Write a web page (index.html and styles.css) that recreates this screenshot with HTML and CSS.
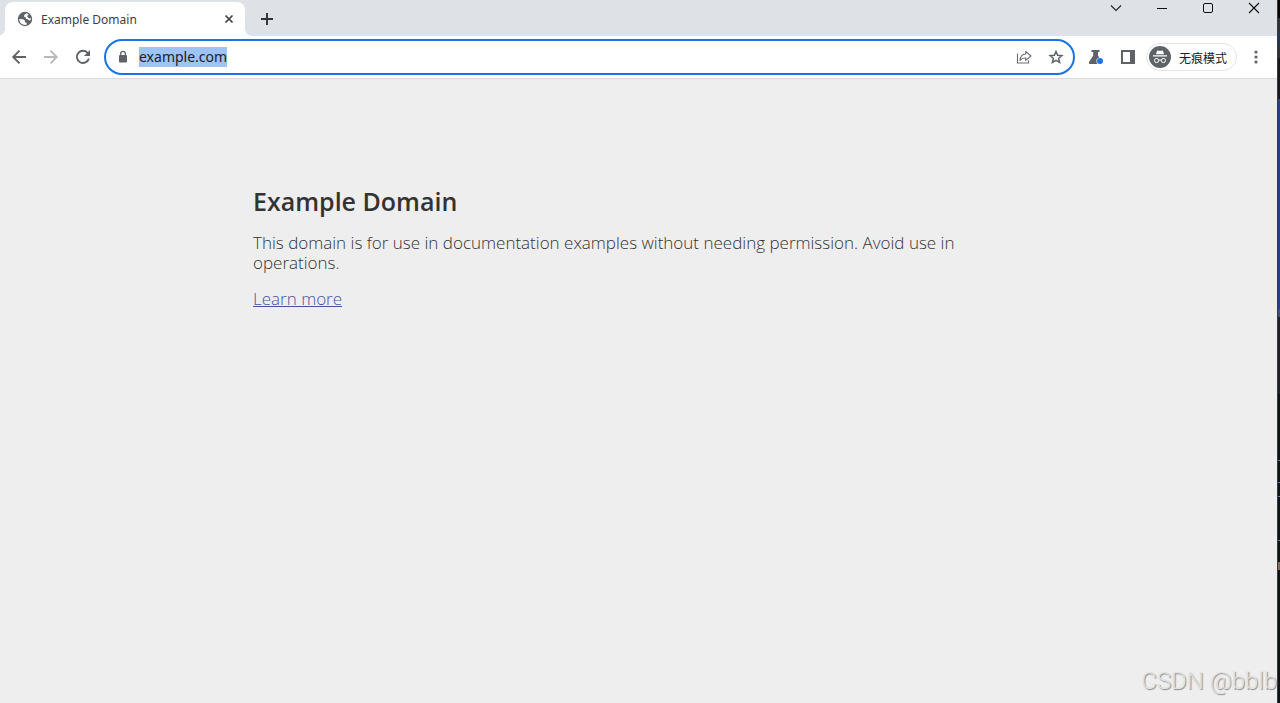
FILE: index.html
```html
<!DOCTYPE html>
<html lang="en">
<head>
<meta charset="utf-8">
<title>Example Domain</title>
<link rel="stylesheet" href="styles.css">
</head>
<body>
<div class="desktop">
  <div class="browser">
    <header class="tabstrip">
      <div class="tab">
        <svg class="favicon" viewBox="0 0 16 16" width="16" height="16"><circle cx="8" cy="8" r="7.2" fill="#5f6368"/><path d="M9.800 2.200 7.500 3.500 7 5.500 8.800 6.500 9 8l2 .2 1 1.300 1.800-.4V7.500L11.500 7 10 5l1.800-1.200zM2.100 8l3.900.2 2 1.600v1.400L9.800 12 9.300 13.900Q2.700 14.300 2.100 8z" fill="#fff"/></svg>
        <span class="tab-title">Example Domain</span>
        <button class="tab-close" aria-label="Close tab"><svg viewBox="0 0 16 16" width="16" height="16"><path d="m4.500 4.500 7 7m0-7-7 7" stroke="#3c4043" stroke-width="1.700"/></svg></button>
      </div>
      <button class="new-tab" aria-label="New tab"><svg viewBox="0 0 16 16" width="16" height="16"><path d="M8 2v12M2 8h12" stroke="#303235" stroke-width="1.900"/></svg></button>
      <div class="window-controls">
        <button aria-label="Search tabs"><svg viewBox="0 0 16 16" width="16" height="16"><path d="m3 5.500 5 5 5-5" fill="none" stroke="#222" stroke-width="1.100"/></svg></button>
        <button aria-label="Minimize"><svg viewBox="0 0 16 16" width="16" height="16"><path d="M3 8.500h10" stroke="#111"/></svg></button>
        <button aria-label="Maximize"><svg viewBox="0 0 16 16" width="16" height="16"><rect x="3.500" y="3.500" width="9" height="9" rx="1.500" fill="none" stroke="#111"/></svg></button>
        <button aria-label="Close"><svg viewBox="0 0 16 16" width="16" height="16"><path d="m3 3 10 10M13 3 3 13" stroke="#111" stroke-width="1.200"/></svg></button>
      </div>
    </header>
    <nav class="toolbar">
      <button class="nav-button" aria-label="Back"><svg viewBox="0 0 16 16" width="16" height="16"><path d="M15 8H2m6.500-6.300L2.200 8l6.300 6.300" fill="none" stroke="#5f6368" stroke-width="1.900"/></svg></button>
      <button class="nav-button" aria-label="Forward" disabled><svg viewBox="0 0 16 16" width="16" height="16"><path d="M1 8h13M7.500 1.700 13.800 8l-6.300 6.300" fill="none" stroke="#bababa" stroke-width="1.900"/></svg></button>
      <button class="nav-button" aria-label="Reload"><svg viewBox="0 0 16 16" width="16" height="16"><path d="M12.900 4.200A6.100 6.100 0 1 0 13.900 9.500" fill="none" stroke="#5f6368" stroke-width="1.900"/><path d="M15 1v6H9z" fill="#5f6368"/></svg></button>
      <div class="omnibox">
        <svg class="lock" viewBox="0 0 16 16" width="16" height="16"><rect x="4" y="6" width="8" height="7.500" rx="1" fill="#5f6368"/><path d="M5.700 6.500V4.600a2.300 2.300 0 0 1 4.600 0v1.900" fill="none" stroke="#5f6368" stroke-width="1.300"/></svg>
        <input class="address" id="address" type="text" value="example.com" aria-label="Address" spellcheck="false">
        <button class="icon-button" aria-label="Share"><svg viewBox="0 0 16 16" width="16" height="16"><path d="M1.500 4.500v9.500h11v-2.500" fill="none" stroke="#6b6f73" stroke-width="1.100"/><path d="M9.700 2.500 15 7l-5.300 4.400V9C7 8.800 5.400 9.500 4 11.300c.3-3.800 2.300-6 5.700-6.300z" fill="none" stroke="#6b6f73" stroke-width="1.100" stroke-linejoin="round"/></svg></button>
        <button class="icon-button" aria-label="Bookmark"><svg viewBox="0 0 16 16" width="16" height="16"><path d="m8 2.500 1.600 3.800 4.200.4-3.200 2.700 1 4.100L8 11.300l-3.600 2.200 1-4.100-3.200-2.700 4.200-.4z" fill="none" stroke="#5f6368" stroke-width="1.500"/></svg></button>
      </div>
      <div class="actions">
        <button class="icon-button" aria-label="Experiments"><svg viewBox="0 0 16 16" width="16" height="16"><path d="M3.500 1h8v2H10v3.500l4 6.500q.8 2-1 2H2q-1.800 0-1-2l4.200-6.500V3H3.500z" fill="#5f6368"/><circle cx="12" cy="12" r="3.600" fill="#fff"/><circle cx="12" cy="12" r="3" fill="#1a73e8"/></svg></button>
        <button class="icon-button" aria-label="Side panel"><svg viewBox="0 0 16 16" width="16" height="16"><path fill-rule="evenodd" d="M1 1h14v14H1zm2 2v10h7V3z" fill="#5f6368"/></svg></button>
        <button class="profile">
          <svg viewBox="0 0 22 22" width="22" height="22"><circle cx="11" cy="11" r="11" fill="#5f6368"/><path d="M7 8.300 8 5q.3-.8 1.100-.5l1.900.5 1.900-.5q.8-.3 1.100.5l1 3.300zM4 9.300h14v1.200H4z" fill="#fff"/><circle cx="7.600" cy="14.500" r="2.100" fill="none" stroke="#fff"/><circle cx="14.400" cy="14.500" r="2.100" fill="none" stroke="#fff"/><path d="M9.700 14.300q1.300-.8 2.600 0" fill="none" stroke="#fff"/></svg>
          <span lang="zh-CN">无痕模式</span>
        </button>
        <button class="icon-button" aria-label="Menu"><svg viewBox="0 0 16 16" width="16" height="16"><g fill="#5f6368"><circle cx="8" cy="3" r="1.600"/><circle cx="8" cy="8" r="1.600"/><circle cx="8" cy="13" r="1.600"/></g></svg></button>
      </div>
    </nav>
    <main class="page">
      <article class="message">
        <h1>Example Domain</h1>
        <p>This domain is for use in documentation examples without needing permission. Avoid use in operations.</p>
        <p><a href="#">Learn more</a></p>
      </article>
    </main>
    <div class="watermark">CSDN @bblb</div>
  </div>
  <div class="backdrop"></div>
</div>
<script src="script.js"></script>
</body>
</html>
```
FILE: styles.css
```css
* { box-sizing: border-box; }
body {
  margin: 0;
  font-family: "Noto Sans", "Noto Sans CJK SC", sans-serif;
}
button {
  display: flex;
  align-items: center;
  justify-content: center;
  padding: 0;
  border: 0;
  background: none;
  font: inherit;
}
svg { display: block; flex: none; }

.desktop { display: flex; min-height: 100vh; }
.browser {
  position: relative;
  display: flex;
  flex: 1;
  flex-direction: column;
  min-width: 0;
  background: #eee;
}
.backdrop {
  width: 3px;
  border-left: 1px solid #3a3b3e;
  background: linear-gradient(#050505 18px, #303236 18px 30px, #23345c 30px 46px, #303236 46px 58px, #17181a 58px 99px, #21438a 99px 309px, #3a5088 309px 317px, #202124 317px 394px, #0e1118 394px 460px, #4d83b5 460px 461px, #0e1118 461px 482px, #4d83b5 482px 483px, #0e1118 483px 496px, #4d83b5 496px 497px, #0e1118 497px 540px, #4d83b5 540px 541px, #0e1118 541px 562px, #8a6a55 562px 570px, #0e1118 570px);
}

.tabstrip {
  display: flex;
  height: 36px;
  padding-left: 5px;
  background: #dee1e6;
}
.tab {
  position: relative;
  display: flex;
  align-items: center;
  gap: 8px;
  width: 240px;
  margin-top: 2px;
  padding: 0 8px 0 12px;
  border-radius: 8px 8px 0 0;
  background: #fff;
}
.tab::before,
.tab::after {
  content: "";
  position: absolute;
  bottom: 0;
  width: 8px;
  height: 8px;
}
.tab::before { right: 100%; background: radial-gradient(circle at 0 0, #dee1e6 8px, #fff 8px); }
.tab::after { left: 100%; background: radial-gradient(circle at 100% 0, #dee1e6 8px, #fff 8px); }
.tab-title { flex: 1; font-size: 12px; color: #3c4043; }
.new-tab { width: 28px; height: 28px; margin: 5px 0 0 8px; }
.window-controls { display: flex; margin-left: auto; }
.window-controls button { width: 46px; height: 16px; }

.toolbar {
  display: flex;
  align-items: center;
  height: 43px;
  padding: 0 13px 0 3px;
  border-bottom: 1px solid #d9dadc;
  background: #fff;
}
.nav-button { width: 32px; height: 32px; }
.omnibox {
  display: flex;
  flex: 1;
  align-items: center;
  height: 36px;
  min-width: 0;
  margin-left: 5px;
  padding: 0 9px;
  border: 2px solid #1a73e8;
  border-radius: 18px;
  gap: 16px;
}
.lock { margin-right: -8px; }
.address {
  flex: 1;
  min-width: 0;
  padding: 0;
  border: 0;
  outline: 0;
  background: none;
  font: 14px/20px "Noto Sans", sans-serif;
  color: #202124;
}
.address::selection { background: #9dc3f7; color: #202124; }
.icon-button { width: 16px; height: 32px; }
.actions {
  display: flex;
  align-items: center;
  gap: 16px;
  margin-left: 13px;
}
.profile {
  gap: 8px;
  height: 28px;
  margin: 0 -5px 0 -6px;
  padding: 0 9px 0 2px;
  border: 1px solid #e3e4e6;
  border-radius: 14px;
  font: 12px "Noto Sans CJK SC", sans-serif;
  color: #202124;
}

.page { flex: 1; padding-right: 3px; }
.message {
  width: 60vw;
  margin: 104px auto 0;
  font-family: "Open Sans", sans-serif;
  font-size: 17px;
  font-weight: 330;
  line-height: 20px;
  color: #333;
}
.message h1 {
  margin: 0;
  font-size: 25px;
  font-weight: 650;
  line-height: 36px;
}
.message p { margin: 16px 0; }
.message h1 + p { margin-top: 14px; }
.message a { color: #4454a0; }

.watermark {
  position: absolute;
  right: 0;
  bottom: 6px;
  font: 300 24px/32px Roboto, sans-serif;
  color: #e2e2e2;
  text-shadow: 1px 1px 1px #888;
}
```
FILE: script.js
```js
const address = document.getElementById("address");
address.focus();
address.select();
```
